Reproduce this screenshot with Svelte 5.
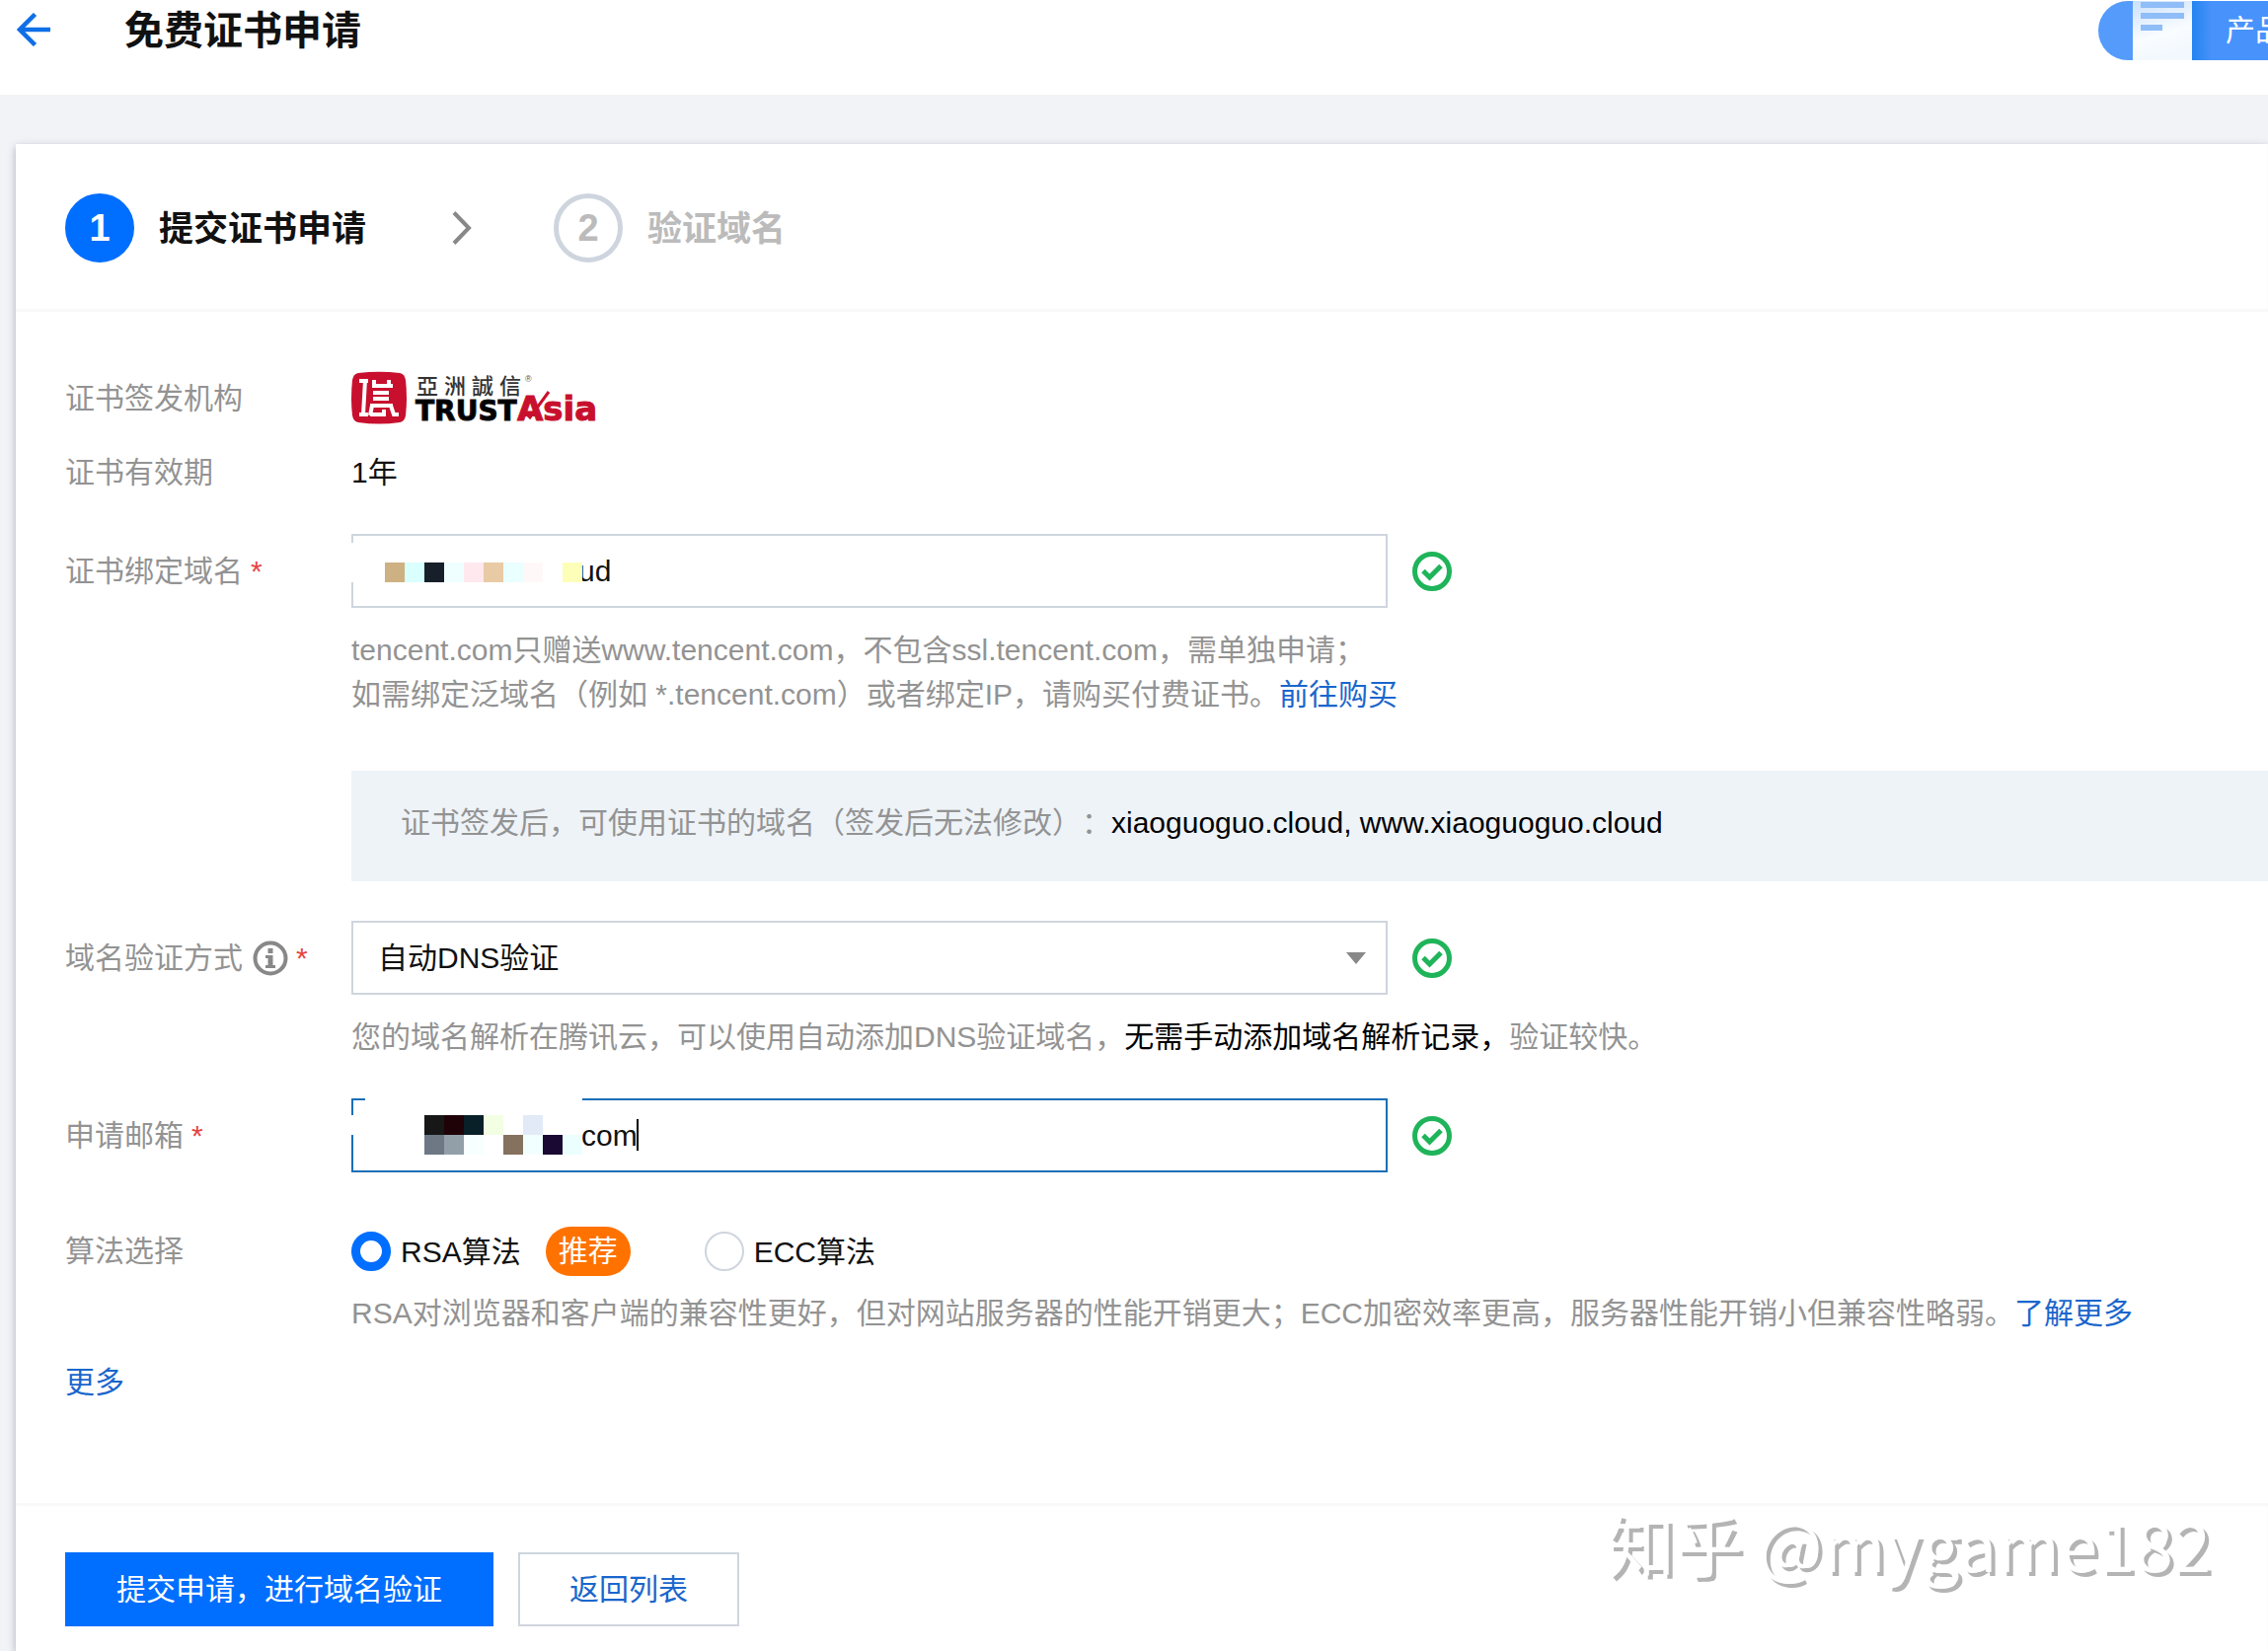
<script lang="ts">
	type Cell = [col: number, row: number, color: string];

	const cell = 20;

	const domainMask: Cell[] = [
		[0, 0, '#fff'],
		[0, 1, '#fff'],
		[2, 1, '#cdb183'],
		[3, 1, '#d9ffff'],
		[4, 1, '#171f2b'],
		[5, 1, '#efffff'],
		[6, 1, '#ffe9ee'],
		[7, 1, '#e8cba5'],
		[8, 1, '#eaffff'],
		[9, 1, '#fff8f8'],
		[11, 1, '#fdffb8']
	];

	const mailMask: Cell[] = [
		[0, 1, '#fff'],
		[4, 1, '#171718'],
		[5, 1, '#1e0207'],
		[6, 1, '#0a2028'],
		[7, 1, '#f2ffe2'],
		[9, 1, '#e2eaf8'],
		[4, 2, '#6d7884'],
		[5, 2, '#939fa8'],
		[6, 2, '#f8ffff'],
		[8, 2, '#84715e'],
		[9, 2, '#f2ffff'],
		[10, 2, '#1a0a33'],
		[11, 2, '#ecffff']
	];

	let domain = $state('ud');
	let mail = $state('com');
	let method = $state('dns-auto');
	let algorithm = $state('rsa');
</script>

{#snippet okIcon()}
	<svg class="ok" viewBox="0 0 40 40" role="img" aria-label="通过">
		<circle cx="20" cy="20" r="17.5" fill="none" stroke="#1fb45a" stroke-width="5"></circle>
		<path d="M11 19.5L17.5 26L29 14.5" fill="none" stroke="#1fb45a" stroke-width="5"></path>
	</svg>
{/snippet}

{#snippet mosaic(cells: Cell[])}
	{#each cells as [col, row, color]}
		<rect x={col * cell} y={row * cell} width={cell} height={cell} fill={color}></rect>
	{/each}
{/snippet}

<header>
	<a class="back" href="#list" aria-label="返回">
		<svg viewBox="0 0 34 34">
			<path d="M18.500 1.500L3 17L18.500 32.500M3 17H34" fill="none" stroke="#0f6fe6" stroke-width="4.500"></path>
		</svg>
	</a>
	<h1>免费证书申请</h1>
	<a class="promo" href="#product">
		<svg viewBox="0 0 60 60" aria-hidden="true">
			<defs>
				<linearGradient id="sheet" x1="0" y1="0" x2="0.3" y2="1">
					<stop offset="0" stop-color="#c9e0fc"></stop>
					<stop offset="0.65" stop-color="#fafdff"></stop>
					<stop offset="1" stop-color="#f2f8fe"></stop>
				</linearGradient>
			</defs>
			<rect width="60" height="60" fill="url(#sheet)"></rect>
			<path d="M8 1H52V7H8zM8 12H52V18H8zM8 24H30V30H8z" fill="#8fbdf8"></path>
		</svg>
		<span>产品</span>
	</a>
</header>

<main>
	<div class="card">
		<ol class="steps">
			<li class="current"><i>1</i>提交证书申请</li>
			<li class="arrow" aria-hidden="true">
				<svg viewBox="0 0 20 34"><path d="M2 1.500L17 17L2 32.500" fill="none" stroke="#888" stroke-width="4"></path></svg>
			</li>
			<li><i>2</i>验证域名</li>
		</ol>

		<form onsubmit={(e) => e.preventDefault()}>
			<div class="row">
				<span class="label">证书签发机构</span>
				<div class="brand">
					<svg viewBox="0 0 252 56" role="img" aria-label="TrustAsia">
						<path d="M7 2Q28 -0.500 49 2Q54 3 55 9Q57 28 55 45Q54 51 49 52Q28 55 7 52Q2 51 1 45Q-1 28 1 9Q2 3 7 2z" fill="#c8102e"></path>
						<g fill="none" stroke="#fff" stroke-width="4">
							<path d="M8 10H17M14 9L12 44M8 44H17"></path>
							<path d="M23 9V15H42M38 9V15M22 22H38M22 28H38M19 35H42M40 35L43 44H48M21 35L19 45M19 44H33V39"></path>
						</g>
						<text class="cn" x="66 94 122 150" y="23">亞洲誠信</text>
						<text class="reg" x="176" y="11">®</text>
						<text class="trust" x="65" y="50">TRUST</text>
						<text class="asia" x="168" y="50">Asia</text>
						<path d="M173 39L181 47L200 21" fill="none" stroke="#c8102e" stroke-width="3"></path>
					</svg>
				</div>
			</div>

			<div class="row short">
				<span class="label">证书有效期</span>
				<div class="value">1年</div>
			</div>

			<div class="row spaced">
				<label class="label" for="domain">证书绑定域名<b>*</b></label>
				<div class="content">
					<div class="control">
						<div class="field">
							<input id="domain" type="text" bind:value={domain} />
							<svg class="mask domain-mask" viewBox="0 0 300 40" aria-hidden="true">
								{@render mosaic(domainMask)}
							</svg>
						</div>
						{@render okIcon()}
					</div>
					<p class="help">
						tencent.com只赠送www.tencent.com，不包含ssl.tencent.com，需单独申请；<br />
						如需绑定泛域名（例如 *.tencent.com）或者绑定IP，请购买付费证书。<a href="#buy">前往购买</a>
					</p>
					<div class="notice">
						证书签发后，可使用证书的域名（签发后无法修改）：<strong>xiaoguoguo.cloud, www.xiaoguoguo.cloud</strong>
					</div>
				</div>
			</div>

			<div class="row spaced">
				<label class="label" for="method">
					域名验证方式
					<svg class="info" viewBox="0 0 36 36" aria-hidden="true">
						<circle cx="18" cy="18" r="15.500" fill="none" stroke="#888" stroke-width="4"></circle>
						<path d="M15.500 8H20.500V13H15.500zM13 15H20.500V25H23V28H13V25H15.500V18H13z" fill="#888"></path>
					</svg>
					<b>*</b>
				</label>
				<div class="content">
					<div class="control">
						<div class="field">
							<select id="method" bind:value={method}>
								<option value="dns-auto">自动DNS验证</option>
							</select>
							<svg class="caret" viewBox="0 0 20 12" aria-hidden="true"><path d="M0 0H20L10 12z" fill="#888"></path></svg>
						</div>
						{@render okIcon()}
					</div>
					<p class="help">
						您的域名解析在腾讯云，可以使用自动添加DNS验证域名，<strong>无需手动添加域名解析记录，</strong>验证较快。
					</p>
				</div>
			</div>

			<div class="row spaced">
				<label class="label" for="mail">申请邮箱<b>*</b></label>
				<div class="content">
					<div class="control">
						<div class="field active">
							<input id="mail" type="text" bind:value={mail} />
							<svg class="mask mail-mask" viewBox="0 0 300 60" aria-hidden="true">
								<rect x="20" y="0" width="220" height="20" fill="#fff"></rect>
								{@render mosaic(mailMask)}
								<rect x="295" y="24" width="2" height="32" fill="#000"></rect>
							</svg>
						</div>
						{@render okIcon()}
					</div>
				</div>
			</div>

			<div class="row algorithm">
				<span class="label" id="algorithm">算法选择</span>
				<div class="content">
					<div class="radios" role="radiogroup" aria-labelledby="algorithm">
						<label><input type="radio" name="algorithm" value="rsa" bind:group={algorithm} />RSA算法</label>
						<em>推荐</em>
						<label><input type="radio" name="algorithm" value="ecc" bind:group={algorithm} />ECC算法</label>
					</div>
					<p class="help">
						RSA对浏览器和客户端的兼容性更好，但对网站服务器的性能开销更大；ECC加密效率更高，服务器性能开销小但兼容性略弱。<a href="#learn">了解更多</a>
					</p>
				</div>
			</div>

			<a class="more" href="#more">更多</a>

			<footer>
				<button class="primary" type="submit">提交申请，进行域名验证</button>
				<button type="button">返回列表</button>
			</footer>
		</form>
	</div>
	<div class="watermark">知乎 @mygame182</div>
</main>

<style>
	:global(body) {
		background: #f2f3f7;
	}

	header,
	main {
		font-family: 'Liberation Sans', 'Noto Sans CJK SC', sans-serif;
		font-size: 30px;
		line-height: 45px;
		color: #111;
		text-spacing-trim: space-all;
	}

	a {
		color: #1a66cc;
		text-decoration: none;
	}

	header {
		display: flex;
		align-items: flex-start;
		box-sizing: border-box;
		height: 96px;
		padding: 1px 0 0 17px;
		background: #fff;
		overflow: hidden;
	}

	.back {
		display: flex;
		align-items: center;
		height: 58px;
		margin-right: 75px;
	}

	.back svg {
		width: 34px;
		height: 34px;
	}

	h1 {
		margin: 0;
		font-size: 40px;
		line-height: 60px;
		font-weight: 700;
	}

	.promo {
		display: flex;
		box-sizing: border-box;
		width: 172px;
		height: 60px;
		margin-left: auto;
		padding-left: 35px;
		border-radius: 30px 0 0 30px;
		background: #559bfb;
		color: #fff;
		line-height: 60px;
		white-space: nowrap;
		overflow: hidden;
	}

	.promo svg {
		flex: none;
		width: 60px;
		height: 60px;
	}

	.promo span {
		padding-left: 34px;
		background: linear-gradient(90deg, #2484f0, #4892fb 20px);
	}

	main {
		position: relative;
		padding: 50px 0 0 16px;
		overflow: hidden;
	}

	.card {
		background: #fff;
		box-shadow: 0 3px 8px rgba(40, 50, 80, 0.35);
	}

	.steps {
		display: flex;
		align-items: center;
		margin: 0;
		padding: 50px;
		list-style: none;
		box-shadow: inset 0 -3px 2px #f8f8f9;
	}

	.steps li {
		display: flex;
		align-items: center;
		gap: 25px;
		font-size: 35px;
		font-weight: 700;
		color: #bbb;
	}

	.steps i {
		display: grid;
		place-items: center;
		box-sizing: border-box;
		width: 70px;
		height: 70px;
		border: 5px solid #cfd5de;
		border-radius: 50%;
		font-size: 38px;
		font-style: normal;
	}

	.steps .current {
		color: #111;
	}

	.current i {
		border-color: #006eff;
		background: #006eff;
		color: #fff;
	}

	.steps .arrow {
		margin: 0 83px 0 87px;
	}

	.arrow svg {
		width: 20px;
		height: 34px;
	}

	form {
		padding-top: 50px;
	}

	.row {
		display: flex;
		padding-left: 50px;
	}

	.label {
		display: flex;
		align-items: center;
		gap: 10px;
		flex: none;
		width: 290px;
		height: 75px;
		color: #939393;
	}

	.label b {
		margin-left: -2px;
		font-weight: 400;
		color: #e54545;
	}

	.info {
		width: 36px;
		height: 36px;
	}

	.brand {
		display: flex;
		align-items: center;
	}

	.brand svg {
		width: 252px;
		height: 56px;
		overflow: visible;
	}

	.cn {
		font: 500 22px 'Noto Sans CJK TC', sans-serif;
		fill: #333;
	}

	.reg {
		font-size: 9px;
		fill: #555;
	}

	.trust,
	.asia {
		font: 700 28px 'DejaVu Sans', sans-serif;
		stroke: #111;
		stroke-width: 1px;
	}

	.asia {
		font-size: 34px;
		fill: #c8102e;
		stroke: #c8102e;
	}

	.short {
		margin-top: 15px;
	}

	.short .label {
		height: 45px;
	}

	.spaced {
		margin-top: 40px;
	}

	.content {
		flex: 1;
		min-width: 0;
	}

	.control {
		display: flex;
		align-items: center;
		gap: 25px;
	}

	.field {
		position: relative;
		flex: 0 1 1050px;
		height: 75px;
	}

	.field input,
	.field select {
		box-sizing: border-box;
		width: 100%;
		height: 75px;
		margin: 0;
		border: 2px solid #cfd5de;
		border-radius: 0;
		background: #fff;
		color: #111;
		font: inherit;
		outline: none;
		appearance: none;
	}

	.field input {
		padding: 0 20px 0 228px;
	}

	.field select {
		padding: 0 60px 0 25px;
	}

	.active input {
		padding-left: 231px;
		border-color: #1a6fb8;
	}

	.mask {
		position: absolute;
		left: -6px;
		width: 300px;
		pointer-events: none;
	}

	.domain-mask {
		top: 9px;
		height: 40px;
	}

	.mail-mask {
		top: -3px;
		height: 60px;
	}

	.caret {
		position: absolute;
		top: 32px;
		right: 22px;
		width: 20px;
		height: 12px;
		pointer-events: none;
	}

	.ok {
		flex: none;
		width: 40px;
		height: 40px;
	}

	.help {
		margin: 20px 0 0;
		color: #939393;
	}

	strong {
		font-weight: 400;
		color: #000;
	}

	.notice {
		margin-top: 55px;
		padding: 30px 50px 37px;
		background: #eef3f8;
		color: #939393;
	}

	.algorithm {
		margin-top: 55px;
	}

	.algorithm .label {
		height: 48px;
	}

	.algorithm .help {
		margin-top: 15px;
	}

	.radios {
		display: flex;
		align-items: center;
		height: 50px;
	}

	.radios label {
		display: flex;
		align-items: center;
		gap: 10px;
	}

	.radios input {
		box-sizing: border-box;
		width: 40px;
		height: 40px;
		margin: 0;
		border: 2px solid #cfd5de;
		border-radius: 50%;
		background: #fff;
		appearance: none;
	}

	.radios input:checked {
		border: 9px solid #006eff;
	}

	.radios em {
		margin: 0 75px 0 25px;
		padding: 0 13px;
		border-radius: 25px;
		background: #ff7200;
		color: #fff;
		font-style: normal;
		line-height: 50px;
	}

	.more {
		display: inline-block;
		margin: 25px 0 100px 50px;
	}

	footer {
		display: flex;
		gap: 25px;
		padding: 50px 50px 25px;
		box-shadow: inset 0 3px 2px #f8f8f9;
	}

	button {
		height: 75px;
		padding: 0 50px;
		border: 2px solid #cfd5de;
		background: #fff;
		color: #1a66cc;
		font: inherit;
	}

	.primary {
		border-color: #006eff;
		background: #006eff;
		color: #fff;
	}

	.watermark {
		position: absolute;
		right: 58px;
		bottom: 62px;
		font-family: 'Noto Sans CJK SC', sans-serif;
		font-size: 69px;
		line-height: 96px;
		color: #fff;
		text-shadow: 4px 4px 0 #b4b4b4;
		pointer-events: none;
	}
</style>
